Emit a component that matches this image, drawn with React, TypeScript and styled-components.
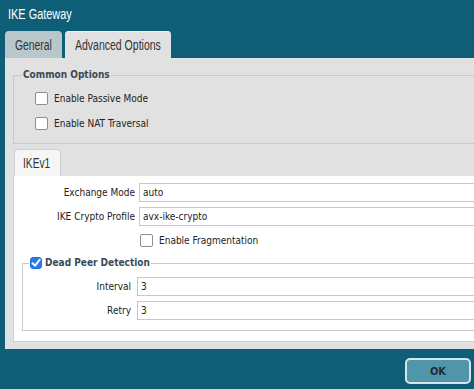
import React from 'react';
import styled, { createGlobalStyle, css } from 'styled-components';

const GlobalStyle = createGlobalStyle`
  html, body {
    margin: 0;
    padding: 0;
    background: #0f5e78;
  }
  body {
    font-family: "DejaVu Sans Condensed", "DejaVu Sans", sans-serif;
    font-size: 10px;
    color: #222;
  }
`;

// no narrow face installed, so squeeze Arial-metric text for the tab/title look
const Narrow = styled.span<{ $scale?: number }>`
  display: inline-block;
  white-space: nowrap;
  font-family: "Liberation Sans", Arial, sans-serif;
  transform: scaleX(${p => p.$scale ?? 0.75});
  transform-origin: left center;
`;

const Checkbox = ({ checked }: { checked?: boolean }) => (
  <Box $checked={checked}>
    {checked && (
      <svg width="10" height="10" viewBox="0 0 10 10">
        <path d="M1.6 5.2 L4 7.6 L8.6 1.8" fill="none" stroke="#fff" strokeWidth="2" strokeLinecap="round" strokeLinejoin="round" />
      </svg>
    )}
  </Box>
);

const App = () => {
  return (
    <Window>
      <GlobalStyle />
      <TitleBar>
        <Narrow $scale={0.78}>IKE Gateway</Narrow>
      </TitleBar>

      <TabRow>
        <Tab $width={57}>
          <Narrow $scale={0.74}>General</Narrow>
        </Tab>
        <Tab $width={106} $active>
          <Narrow>Advanced Options</Narrow>
        </Tab>
      </TabRow>

      <Panel>
        <Group>
          <Legend>Common Options</Legend>
          <CheckRow>
            <Checkbox />
            <span>Enable Passive Mode</span>
          </CheckRow>
          <CheckRow>
            <Checkbox />
            <span>Enable NAT Traversal</span>
          </CheckRow>
        </Group>

        <SubTabRow>
          <SubTab>
            <Narrow $scale={0.73}>IKEv1</Narrow>
          </SubTab>
        </SubTabRow>

        <SubBody>
          <FormGrid>
            <Label>Exchange Mode</Label>
            <Field readOnly value="auto" />
            <Label>IKE Crypto Profile</Label>
            <Field readOnly value="avx-ike-crypto" />
            <FragRow>
              <Checkbox />
              <span>Enable Fragmentation</span>
            </FragRow>
          </FormGrid>

          <DpdGroup>
            <Legend $withBox>
              <Checkbox checked />
              <span>Dead Peer Detection</span>
            </Legend>
            <DpdGrid>
              <Label>Interval</Label>
              <Field readOnly value="3" />
              <Label>Retry</Label>
              <Field readOnly value="3" />
            </DpdGrid>
          </DpdGroup>
        </SubBody>
      </Panel>

      <Footer>
        <OkButton>OK</OkButton>
      </Footer>
    </Window>
  );
};
export default App;

const Window = styled.div`
  width: 474px;
  height: 389px;
  overflow: hidden;
  background: #0f5e78;
  display: flex;
  flex-direction: column;
`;
const TitleBar = styled.div`
  height: 31px;
  line-height: 28px;
  padding-left: 8px;
  font-size: 14px;
  color: #fff;
`;
const TabRow = styled.div`
  display: flex;
  gap: 3px;
  padding-left: 5px;
  height: 27px;
`;
const Tab = styled.div<{ $active?: boolean; $width: number }>`
  box-sizing: border-box;
  width: ${p => p.$width}px;
  height: 27px;
  line-height: 28px;
  padding-left: 10px;
  font-size: 14px;
  color: #333;
  border-radius: 4px 4px 0 0;
  background: ${p => (p.$active ? '#e1e1e1' : '#b7c7cb')};
  ${p => p.$active && css`
    box-shadow: inset 0 1px 0 #f0f0f0;
  `}
`;
const Panel = styled.div`
  box-sizing: border-box;
  width: calc(100% + 40px);
  margin-left: 5px;
  height: 291px;
  padding: 11px 0 8px 8px;
  background: #e1e1e1;
  display: flex;
  flex-direction: column;
`;
const Group = styled.fieldset`
  margin: 0;
  padding: 0 0 7px 8px;
  border: 1px solid #c9c9c9;
  min-width: 0;
`;
const Legend = styled.legend<{ $withBox?: boolean }>`
  padding: 0 1px;
  font-weight: bold;
  font-size: 10px;
  line-height: 12px;
  color: #3b4a55;
  ${p => p.$withBox && css`
    display: flex;
    align-items: center;
    gap: 3px;
  `}
`;
const CheckRow = styled.div`
  display: flex;
  align-items: center;
  gap: 6px;
  height: 25px;
  margin-left: 13px;
  &:first-of-type {
    margin-top: 5px;
  }
`;
const Box = styled.span<{ $checked?: boolean }>`
  box-sizing: border-box;
  width: 13px;
  height: 13px;
  flex: none;
  display: inline-flex;
  align-items: center;
  justify-content: center;
  border-radius: 2px;
  border: 1px solid ${p => (p.$checked ? '#1f6fe0' : '#8e8e8e')};
  background: ${p => (p.$checked ? '#2a7ae9' : '#fff')};
  ${p => p.$checked && css`
    width: 12px;
    height: 12px;
    border-radius: 3px;
  `}
`;
const SubTabRow = styled.div`
  display: flex;
  margin-top: 5px;
  padding-left: 1px;
  height: 27px;
`;
const SubTab = styled.div`
  box-sizing: border-box;
  width: 47px;
  height: 27px;
  line-height: 27px;
  padding-left: 8px;
  font-size: 14px;
  color: #333;
  background: #f6f6f6;
  border: 1px solid #cfcfcf;
  border-bottom: none;
  border-radius: 4px 4px 0 0;
`;
const SubBody = styled.div`
  box-sizing: border-box;
  height: 166px;
  padding: 7px 0 11px 0;
  background: #fff;
  border-left: 1px solid #cfcfcf;
  border-bottom: 1px solid #cfcfcf;
  display: flex;
  flex-direction: column;
`;
const FormGrid = styled.div`
  display: grid;
  grid-template-columns: 121px 1fr;
  column-gap: 4px;
  row-gap: 5px;
  align-items: center;
`;
const Label = styled.div`
  text-align: right;
  color: #222;
`;
const Field = styled.input`
  box-sizing: border-box;
  height: 19px;
  margin: 0;
  padding: 0 3px;
  border: 1px solid #c8c8c8;
  border-radius: 0;
  background: #fff;
  font-family: "DejaVu Sans Condensed", "DejaVu Sans", sans-serif;
  font-size: 10px;
  color: #222;
  outline: none;
`;
const FragRow = styled.div`
  grid-column: 2;
  display: flex;
  align-items: center;
  gap: 6px;
  margin: 3px 0 0 1px;
`;
const DpdGroup = styled.fieldset`
  margin: 10px 0 0 8px;
  padding: 0 0 10px 6px;
  border: 1px solid #c9c9c9;
  min-width: 0;
`;
const DpdGrid = styled.div`
  display: grid;
  grid-template-columns: 102px 1fr;
  column-gap: 6px;
  row-gap: 5px;
  align-items: center;
  margin-top: 8px;
`;
const Footer = styled.div`
  flex: 1;
  display: flex;
  justify-content: flex-end;
  align-items: flex-start;
  padding: 9px 3px 0 0;
`;
const OkButton = styled.button`
  box-sizing: border-box;
  width: 66px;
  height: 26px;
  border: 2px solid #d3e6ec;
  border-radius: 5px;
  background: #5095a9;
  font-family: "DejaVu Sans Condensed", "DejaVu Sans", sans-serif;
  font-weight: bold;
  font-size: 11px;
  color: #1c2d35;
`;
